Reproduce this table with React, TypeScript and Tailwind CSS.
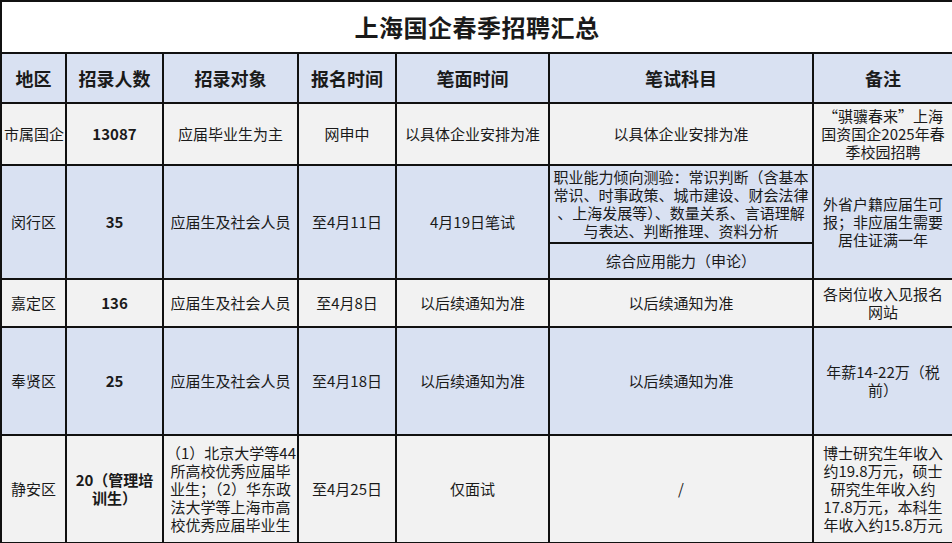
import React from "react";

const font = { fontFamily: '"Noto Sans CJK SC", "Noto Sans", sans-serif' };

const cell = "border-2 border-[#111] text-center align-middle px-0.5";
const blue = "bg-[#d9e1f2]";
const gray = "bg-[#f2f2f2]";

const Lines = ({ lines }: { lines: string[] }) => (
  <>
    {lines.map((l, i) => (
      <div key={i} className="whitespace-nowrap">
        {l}
      </div>
    ))}
  </>
);

export default function App() {
  const headers = ["地区", "招录人数", "招录对象", "报名时间", "笔面时间", "笔试科目", "备注"];

  return (
    <div
      className="w-[952px] h-[543px] overflow-hidden bg-white text-[#1a1a1a]"
      style={font}
    >
      <table className="w-[952px] table-fixed border-collapse text-[15px] leading-[18px]">
        <colgroup>
          <col className="w-[65px]" />
          <col className="w-[97px]" />
          <col className="w-[135px]" />
          <col className="w-[98px]" />
          <col className="w-[153px]" />
          <col className="w-[264px]" />
          <col className="w-[140px]" />
        </colgroup>
        <tbody>
          <tr className="h-[52px]">
            <td
              colSpan={7}
              className="border-2 border-[#111] bg-white text-center text-[24px] font-bold tracking-[0.5px]"
            >
              上海国企春季招聘汇总
            </td>
          </tr>
          <tr className="h-[50px]">
            {headers.map((h) => (
              <td key={h} className={`${cell} ${blue} text-[18px] font-bold`}>
                {h}
              </td>
            ))}
          </tr>

          <tr className="h-[62px]">
            <td className={`${cell} ${gray} whitespace-nowrap px-0`}>市属国企</td>
            <td className={`${cell} ${gray} font-bold`}>13087</td>
            <td className={`${cell} ${gray}`}>应届毕业生为主</td>
            <td className={`${cell} ${gray}`}>网申中</td>
            <td className={`${cell} ${gray}`}>以具体企业安排为准</td>
            <td className={`${cell} ${gray}`}>以具体企业安排为准</td>
            <td className={`${cell} ${gray}`}>
              <Lines lines={["“骐骥春来”上海", "国资国企2025年春", "季校园招聘"]} />
            </td>
          </tr>

          <tr className="h-[78px]">
            <td rowSpan={2} className={`${cell} ${blue}`}>闵行区</td>
            <td rowSpan={2} className={`${cell} ${blue} font-bold`}>35</td>
            <td rowSpan={2} className={`${cell} ${blue}`}>应届生及社会人员</td>
            <td rowSpan={2} className={`${cell} ${blue}`}>至4月11日</td>
            <td rowSpan={2} className={`${cell} ${blue}`}>4月19日笔试</td>
            <td className={`${cell} ${blue}`}>
              <Lines
                lines={[
                  "职业能力倾向测验：常识判断（含基本",
                  "常识、时事政策、城市建设、财会法律",
                  "、上海发展等）、数量关系、言语理解",
                  "与表达、判断推理、资料分析",
                ]}
              />
            </td>
            <td rowSpan={2} className={`${cell} ${blue}`}>
              <Lines lines={["外省户籍应届生可", "报；非应届生需要", "居住证满一年"]} />
            </td>
          </tr>
          <tr className="h-[36px]">
            <td className={`${cell} ${blue}`}>综合应用能力（申论）</td>
          </tr>

          <tr className="h-[48px]">
            <td className={`${cell} ${gray}`}>嘉定区</td>
            <td className={`${cell} ${gray} font-bold`}>136</td>
            <td className={`${cell} ${gray}`}>应届生及社会人员</td>
            <td className={`${cell} ${gray}`}>至4月8日</td>
            <td className={`${cell} ${gray}`}>以后续通知为准</td>
            <td className={`${cell} ${gray}`}>以后续通知为准</td>
            <td className={`${cell} ${gray}`}>
              <Lines lines={["各岗位收入见报名", "网站"]} />
            </td>
          </tr>

          <tr className="h-[108px]">
            <td className={`${cell} ${blue}`}>奉贤区</td>
            <td className={`${cell} ${blue} font-bold`}>25</td>
            <td className={`${cell} ${blue}`}>应届生及社会人员</td>
            <td className={`${cell} ${blue}`}>至4月18日</td>
            <td className={`${cell} ${blue}`}>以后续通知为准</td>
            <td className={`${cell} ${blue}`}>以后续通知为准</td>
            <td className={`${cell} ${blue}`}>
              <Lines lines={["年薪14-22万（税", "前）"]} />
            </td>
          </tr>

          <tr className="h-[108px]">
            <td className={`${cell} ${gray}`}>静安区</td>
            <td className={`${cell} ${gray} font-bold`}>
              <Lines lines={["20（管理培", "训生）"]} />
            </td>
            <td className={`${cell} ${gray}`}>
              <Lines
                lines={[
                  "（1）北京大学等44",
                  "所高校优秀应届毕",
                  "业生；（2）华东政",
                  "法大学等上海市高",
                  "校优秀应届毕业生",
                ]}
              />
            </td>
            <td className={`${cell} ${gray}`}>至4月25日</td>
            <td className={`${cell} ${gray}`}>仅面试</td>
            <td className={`${cell} ${gray}`}>/</td>
            <td className={`${cell} ${gray}`}>
              <Lines
                lines={[
                  "博士研究生年收入",
                  "约19.8万元，硕士",
                  "研究生年收入约",
                  "17.8万元，本科生",
                  "年收入约15.8万元",
                ]}
              />
            </td>
          </tr>
        </tbody>
      </table>
    </div>
  );
}
